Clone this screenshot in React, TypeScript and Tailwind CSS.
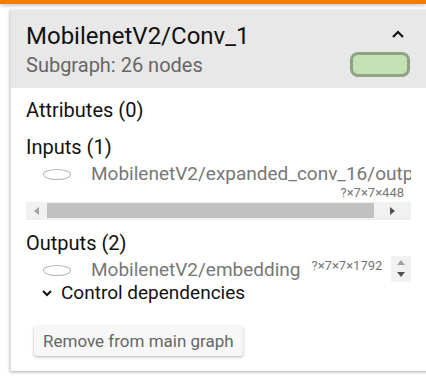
import React from "react";

function Tensor({ w = 28 }: { w?: number }) {
  return (
    <span
      className="inline-block h-[11px] shrink-0 rounded-[50%] border-[1.5px] border-[#b0b0b0]"
      style={{ width: w }}
    />
  );
}

function Tri({ dir, color }: { dir: "up" | "down" | "left" | "right"; color: string }) {
  const pts = {
    up: "0,6 4,1 8,6",
    down: "0,1 4,6 8,1",
    left: "6,0 1,4 6,8",
    right: "1,0 6,4 1,8",
  }[dir];
  return (
    <svg width="8" height="8" viewBox="0 0 8 8">
      <polygon points={pts} fill={color} />
    </svg>
  );
}

export default function App() {
  return (
    <div
      className="relative h-[377px] w-[426px] overflow-hidden bg-white"
      style={{ fontFamily: "Roboto, 'Noto Sans', sans-serif" }}
    >
      <div className="relative z-10 h-[4px] bg-[#f57c00] shadow-[0_1px_4px_rgba(0,0,0,0.3)]" />

      <div className="ml-[10px] mt-[6px] w-[430px] border-l border-[#dcdcdc] shadow-[0_1px_3px_rgba(0,0,0,0.35)]">
        {/* header */}
        <div className="flex h-[78px] items-start justify-between bg-[#e8e8e8] pl-[15px] pr-[30px] pt-[11px]">
          <div className="flex flex-col">
            <span className="text-[24px] leading-[30px] text-[#111]">MobilenetV2/Conv_1</span>
            <span className="mt-[1px] text-[20px] leading-[26px] text-[#666]">Subgraph: 26 nodes</span>
          </div>
          <div className="flex flex-col items-end">
            <svg width="14" height="10" viewBox="0 0 14 10" className="mr-[5px] mt-[8px]">
              <path d="M2 8 L7 3 L12 8" fill="none" stroke="#111" strokeWidth="2.2" />
            </svg>
            <div className="mt-[13px] h-[25px] w-[60px] rounded-[8px] border-[3px] border-[#8fa284] bg-[#c5e2b7]" />
          </div>
        </div>

        {/* body */}
        <div className="pb-[15px] pl-[15px] pt-[9px]">
          <div className="text-[20px] leading-[26px] text-[#111]">Attributes (0)</div>

          <div className="mt-[11px] text-[20px] leading-[26px] text-[#111]">Inputs (1)</div>
          <div className="w-[385px] border-b border-[#eeeeee]">
            <div className="mt-[3px] flex h-[22px] items-center overflow-hidden whitespace-nowrap pl-[17px]">
              <Tensor />
              <span className="ml-[20px] text-[19px] text-[#777]">MobilenetV2/expanded_conv_16/output</span>
            </div>
            <div className="mt-[1px] pr-[7px] text-right text-[13px] leading-[13px] text-[#777]">?×7×7×448</div>
            <div className="mt-[3px] flex h-[17px] items-center bg-[#f1f1f1]">
              <div className="flex w-[21px] justify-center">
                <Tri dir="left" color="#a3a3a3" />
              </div>
              <div className="h-[15px] w-[327px] bg-[#c1c1c1]" />
              <div className="flex flex-1 justify-center">
                <Tri dir="right" color="#505050" />
              </div>
            </div>
          </div>

          <div className="mt-[10px] text-[20px] leading-[26px] text-[#111]">Outputs (2)</div>
          <div className="flex h-[26px] w-[385px] items-start">
            <div className="flex items-center pl-[17px] pt-[3px]">
              <Tensor />
              <span className="ml-[20px] text-[19px] leading-[22px] text-[#777]">MobilenetV2/embedding</span>
              <span className="ml-[11px] -mt-[8px] text-[13px] text-[#777]">?×7×7×1792</span>
            </div>
            <div className="ml-auto flex h-[26px] w-[20px] flex-col items-center justify-between bg-[#f1f1f1] py-[3px]">
              <Tri dir="up" color="#a3a3a3" />
              <Tri dir="down" color="#505050" />
            </div>
          </div>
          <div className="flex h-[22px] items-center pl-[15px] text-[19px] leading-[22px] text-[#111]">
            <svg width="12" height="10" viewBox="0 0 12 10" className="mr-[8px]">
              <path d="M2 3 L6 7 L10 3" fill="none" stroke="#111" strokeWidth="2" />
            </svg>
            Control dependencies
          </div>

          <button className="ml-[8px] mt-[22px] rounded-[3px] bg-[#f7f7f7] px-[9px] py-[4px] text-[17px] leading-[22px] text-[#666] shadow-[0_1px_3px_rgba(0,0,0,0.3)]">
            Remove from main graph
          </button>
        </div>
      </div>
    </div>
  );
}
